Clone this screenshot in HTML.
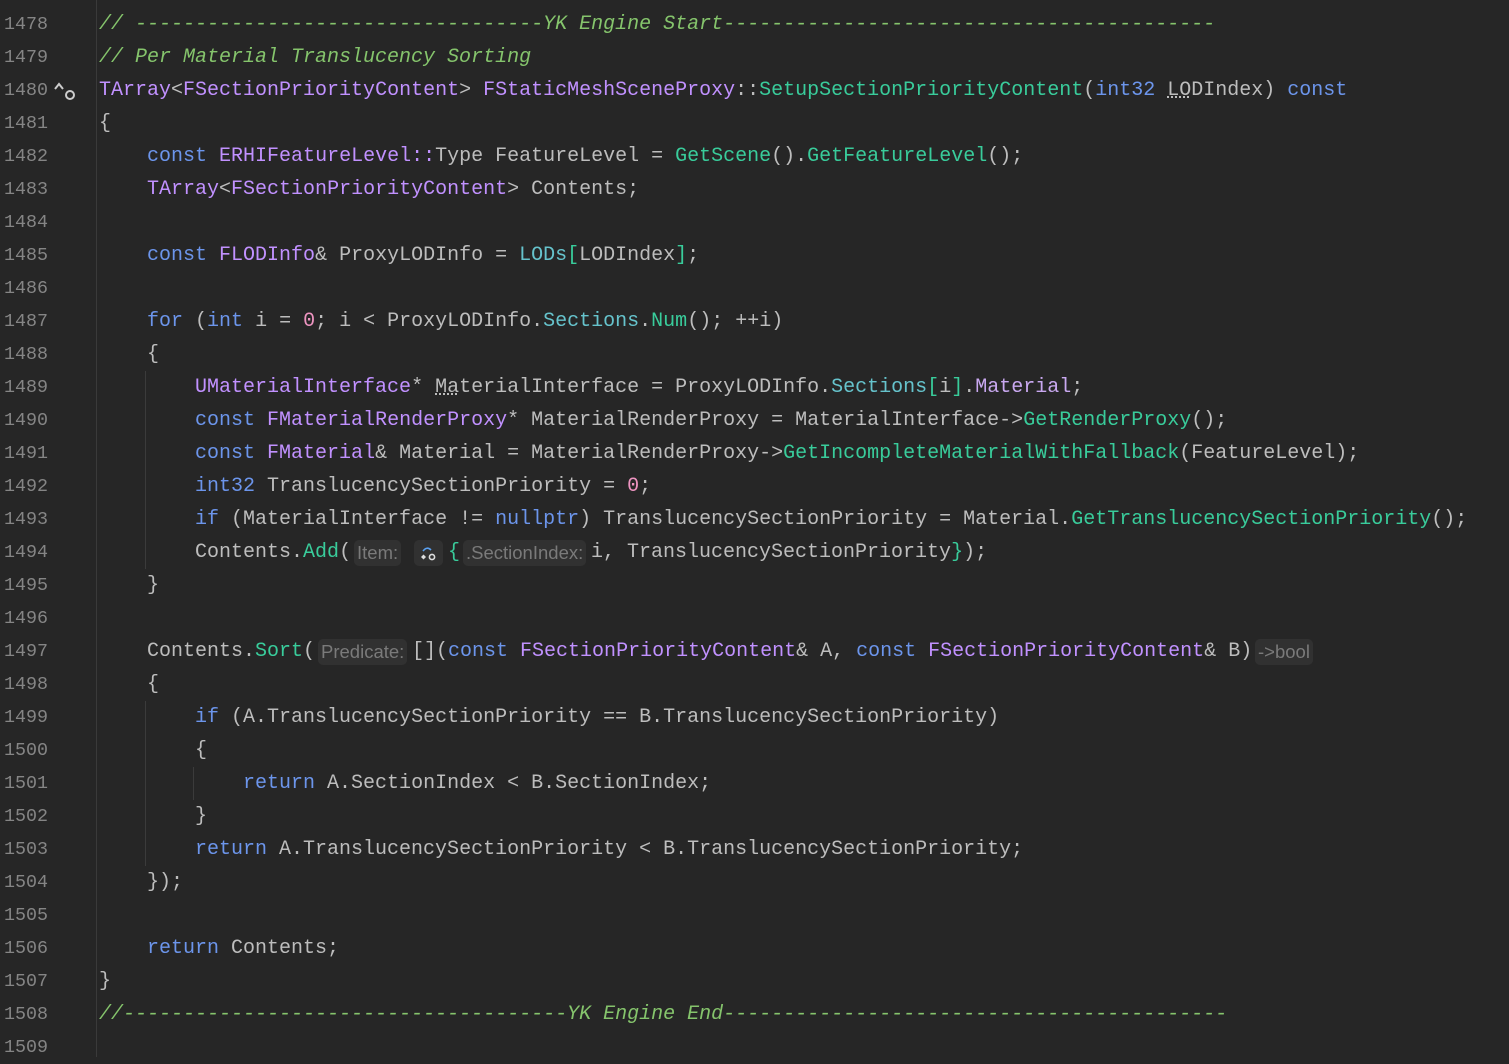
<!DOCTYPE html>
<html><head><meta charset="utf-8"><style>
html,body{margin:0;padding:0;background:#262626;width:1509px;height:1057px;overflow:hidden}
.g{position:absolute;left:0;top:0;width:96px;height:1057px;border-right:1px solid #3a3a3a}
.ln{position:absolute;left:4px;font:18.33px/33px "Liberation Mono",monospace;color:#858585}
.l{position:absolute;left:99px;font:20px/33px "Liberation Mono",monospace;color:#bdbdbd;white-space:pre}
.k{color:#6c95eb}.t{color:#c191ff}.f{color:#39cc9b}.d{color:#66c3cc}.n{color:#ed94c0}.p{color:#c9a8f0}
.c{color:#85c46c;font-style:italic}
.h{position:absolute;font:18.5px/26px "Liberation Sans",sans-serif;color:#7a7a7a;background:#313131;border-radius:5px;padding:0 3px;white-space:pre}
.ig{position:absolute;width:1px;background:#3b3b3b}
.u{text-decoration:underline dotted #bdbdbd}
#w{position:absolute;left:0;top:2px;width:1509px;height:1057px}
</style></head><body>
<div class="g"></div>
<div id="w">
<div class="ig" style="left:145px;top:369px;height:198px"></div>
<div class="ig" style="left:145px;top:699px;height:165px"></div>
<div class="ig" style="left:193px;top:765px;height:33px"></div>
<div class="ln" style="top:6px">1478</div>
<div class="ln" style="top:39px">1479</div>
<div class="ln" style="top:72px">1480</div>
<div class="ln" style="top:105px">1481</div>
<div class="ln" style="top:138px">1482</div>
<div class="ln" style="top:171px">1483</div>
<div class="ln" style="top:204px">1484</div>
<div class="ln" style="top:237px">1485</div>
<div class="ln" style="top:270px">1486</div>
<div class="ln" style="top:303px">1487</div>
<div class="ln" style="top:336px">1488</div>
<div class="ln" style="top:369px">1489</div>
<div class="ln" style="top:402px">1490</div>
<div class="ln" style="top:435px">1491</div>
<div class="ln" style="top:468px">1492</div>
<div class="ln" style="top:501px">1493</div>
<div class="ln" style="top:534px">1494</div>
<div class="ln" style="top:567px">1495</div>
<div class="ln" style="top:600px">1496</div>
<div class="ln" style="top:633px">1497</div>
<div class="ln" style="top:666px">1498</div>
<div class="ln" style="top:699px">1499</div>
<div class="ln" style="top:732px">1500</div>
<div class="ln" style="top:765px">1501</div>
<div class="ln" style="top:798px">1502</div>
<div class="ln" style="top:831px">1503</div>
<div class="ln" style="top:864px">1504</div>
<div class="ln" style="top:897px">1505</div>
<div class="ln" style="top:930px">1506</div>
<div class="ln" style="top:963px">1507</div>
<div class="ln" style="top:996px">1508</div>
<div class="ln" style="top:1029px">1509</div>
<svg style="position:absolute;left:52px;top:78px" width="26" height="22"><path d="M3 9 L7 4 L11 9" fill="none" stroke="#ccc" stroke-width="2"/><circle cx="18" cy="15" r="4" fill="none" stroke="#ccc" stroke-width="2"/></svg>

<div class="l c" style="top:6px">// ----------------------------------YK Engine Start-----------------------------------------</div>
<div class="l c" style="top:39px">// Per Material Translucency Sorting</div>
<div class="l" style="top:72px"><span class="t">TArray</span>&lt;<span class="t">FSectionPriorityContent</span>&gt; <span class="t">FStaticMeshSceneProxy</span>::<span class="f">SetupSectionPriorityContent</span>(<span class="k">int32</span> <span class="u">LO</span>DIndex) <span class="k">const</span></div>
<div class="l" style="top:105px">{</div>
<div class="l" style="top:138px">    <span class="k">const</span> <span class="t">ERHIFeatureLevel</span><span class="t">::</span>Type FeatureLevel = <span class="f">GetScene</span>().<span class="f">GetFeatureLevel</span>();</div>
<div class="l" style="top:171px">    <span class="t">TArray</span>&lt;<span class="t">FSectionPriorityContent</span>&gt; Contents;</div>
<div class="l" style="top:237px">    <span class="k">const</span> <span class="t">FLODInfo</span>&amp; ProxyLODInfo = <span class="d">LODs</span><span class="f">[</span>LODIndex<span class="f">]</span>;</div>
<div class="l" style="top:303px">    <span class="k">for</span> (<span class="k">int</span> i = <span class="n">0</span>; i &lt; ProxyLODInfo.<span class="d">Sections</span>.<span class="f">Num</span>(); ++i)</div>
<div class="l" style="top:336px">    {</div>
<div class="l" style="top:369px">        <span class="t">UMaterialInterface</span>* <span class="u">Ma</span>terialInterface = ProxyLODInfo.<span class="d">Sections</span><span class="f">[</span>i<span class="f">]</span>.<span class="p">Material</span>;</div>
<div class="l" style="top:402px">        <span class="k">const</span> <span class="t">FMaterialRenderProxy</span>* MaterialRenderProxy = MaterialInterface-&gt;<span class="f">GetRenderProxy</span>();</div>
<div class="l" style="top:435px">        <span class="k">const</span> <span class="t">FMaterial</span>&amp; Material = MaterialRenderProxy-&gt;<span class="f">GetIncompleteMaterialWithFallback</span>(FeatureLevel);</div>
<div class="l" style="top:468px">        <span class="k">int32</span> TranslucencySectionPriority = <span class="n">0</span>;</div>
<div class="l" style="top:501px">        <span class="k">if</span> (MaterialInterface != <span class="k">nullptr</span>) TranslucencySectionPriority = Material.<span class="f">GetTranslucencySectionPriority</span>();</div>
<div class="l" style="top:534px">        Contents.<span class="f">Add</span>(</div>
<div class="h" style="left:354px;top:538px">Item:</div>
<div class="h" style="left:414px;top:538px;width:23px;height:26px"><svg width="23" height="26" style="position:absolute;left:3px;top:0"><path d="M6 11 Q10 6 14 10" fill="none" stroke="#5aa0f0" stroke-width="1.6"/><path d="M4 17 L6.5 14.5 L9 17 L6.5 19.5Z" fill="#ddd"/><circle cx="15" cy="17" r="2.6" fill="none" stroke="#ddd" stroke-width="1.6"/></svg></div>
<div class="l f" style="top:534px;left:448px">{</div>
<div class="h" style="left:463px;top:538px">.SectionIndex:</div>
<div class="l" style="top:534px;left:591px">i, TranslucencySectionPriority<span class="f">}</span>);</div>
<div class="l" style="top:567px">    }</div>
<div class="l" style="top:633px">    Contents.<span class="f">Sort</span>(</div>
<div class="h" style="left:318px;top:637px">Predicate:</div>
<div class="l" style="top:633px;left:412px">[](<span class="k">const</span> <span class="t">FSectionPriorityContent</span>&amp; A, <span class="k">const</span> <span class="t">FSectionPriorityContent</span>&amp; B)</div>
<div class="h" style="left:1255px;top:637px">-&gt;bool</div>
<div class="l" style="top:666px">    {</div>
<div class="l" style="top:699px">        <span class="k">if</span> (A.TranslucencySectionPriority == B.TranslucencySectionPriority)</div>
<div class="l" style="top:732px">        {</div>
<div class="l" style="top:765px">            <span class="k">return</span> A.SectionIndex &lt; B.SectionIndex;</div>
<div class="l" style="top:798px">        }</div>
<div class="l" style="top:831px">        <span class="k">return</span> A.TranslucencySectionPriority &lt; B.TranslucencySectionPriority;</div>
<div class="l" style="top:864px">    });</div>
<div class="l" style="top:930px">    <span class="k">return</span> Contents;</div>
<div class="l" style="top:963px">}</div>
<div class="l c" style="top:996px">//-------------------------------------YK Engine End------------------------------------------</div>
</div>
</body></html>
